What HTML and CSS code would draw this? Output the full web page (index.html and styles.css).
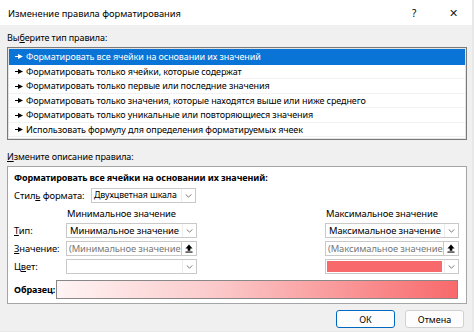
FILE: index.html
```html
<!DOCTYPE html>
<html lang="ru">
<head>
    <meta charset="UTF-8">
    <title>Изменение правила форматирования</title>
    <link rel="stylesheet" href="styles.css">
</head>
<body>
    <div class="dialog">
        <header class="titlebar">
            <span class="title">Изменение правила форматирования</span>
            <span class="help">?</span>
            <span class="close">&#x2715;</span>
        </header>

        <main class="content">
            <!-- Rule type -->
            <div class="caption caption-first">Вы<u>б</u>ерите тип правила:</div>
            <ul class="rule-list">
                <li class="selected"><svg class="bullet" viewBox="0 0 8 5"><path d="M0 2.5H4" stroke="currentColor" stroke-width="1"/><path d="M3 0L8 2.5L3 5Z" fill="currentColor"/></svg>Форматировать все ячейки на основании их значений</li>
                <li><svg class="bullet" viewBox="0 0 8 5"><path d="M0 2.5H4" stroke="currentColor" stroke-width="1"/><path d="M3 0L8 2.5L3 5Z" fill="currentColor"/></svg>Форматировать только ячейки, которые содержат</li>
                <li><svg class="bullet" viewBox="0 0 8 5"><path d="M0 2.5H4" stroke="currentColor" stroke-width="1"/><path d="M3 0L8 2.5L3 5Z" fill="currentColor"/></svg>Форматировать только первые или последние значения</li>
                <li><svg class="bullet" viewBox="0 0 8 5"><path d="M0 2.5H4" stroke="currentColor" stroke-width="1"/><path d="M3 0L8 2.5L3 5Z" fill="currentColor"/></svg>Форматировать только значения, которые находятся выше или ниже среднего</li>
                <li><svg class="bullet" viewBox="0 0 8 5"><path d="M0 2.5H4" stroke="currentColor" stroke-width="1"/><path d="M3 0L8 2.5L3 5Z" fill="currentColor"/></svg>Форматировать только уникальные или повторяющиеся значения</li>
                <li><svg class="bullet" viewBox="0 0 8 5"><path d="M0 2.5H4" stroke="currentColor" stroke-width="1"/><path d="M3 0L8 2.5L3 5Z" fill="currentColor"/></svg>Использовать формулу для определения форматируемых ячеек</li>
            </ul>

            <!-- Rule description -->
            <div class="caption caption-second"><u>И</u>змените описание правила:</div>
            <section class="rule-box">
                <div class="rule-title">Форматировать все ячейки на основании их значений:</div>

                <div class="style-row">
                    <span class="style-label">Стил<u>ь</u> формата:</span>
                    <div class="select style-select">
                        <span class="select-text">Двухцветная шкала</span>
                        <span class="select-arrow"><svg viewBox="0 0 8 5"><path d="M0.5 0.5L4 4L7.5 0.5" fill="none" stroke="#555" stroke-width="1"/></svg></span>
                    </div>
                </div>

                <div class="grid">
                    <span></span>
                    <span class="col-head">Минимальное значение</span>
                    <span></span>
                    <span class="col-head">Максимальное значение</span>

                    <span class="row-label"><u>Т</u>ип:</span>
                    <div class="select">
                        <span class="select-text">Минимальное значение</span>
                        <span class="select-arrow"><svg viewBox="0 0 8 5"><path d="M0.5 0.5L4 4L7.5 0.5" fill="none" stroke="#555" stroke-width="1"/></svg></span>
                    </div>
                    <span></span>
                    <div class="select">
                        <span class="select-text">Максимальное значение</span>
                        <span class="select-arrow"><svg viewBox="0 0 8 5"><path d="M0.5 0.5L4 4L7.5 0.5" fill="none" stroke="#555" stroke-width="1"/></svg></span>
                    </div>

                    <span class="row-label"><u>З</u>начение:</span>
                    <div class="field">
                        <span class="field-text">(Минимальное значение)</span>
                        <span class="field-button"><svg viewBox="0 0 9 10"><path d="M4.5 0.5L8.5 5H6V7.5H3V5H0.5Z" fill="#000"/><path d="M0.5 9H8.5" stroke="#000" stroke-width="1.2"/></svg></span>
                    </div>
                    <span></span>
                    <div class="field">
                        <span class="field-text">(Максимальное значение)</span>
                        <span class="field-button"><svg viewBox="0 0 9 10"><path d="M4.5 0.5L8.5 5H6V7.5H3V5H0.5Z" fill="#000"/><path d="M0.5 9H8.5" stroke="#000" stroke-width="1.2"/></svg></span>
                    </div>

                    <span class="row-label">Ц<u>в</u>ет:</span>
                    <div class="select color-select">
                        <span class="swatch"></span>
                        <span class="select-arrow"><svg viewBox="0 0 8 5"><path d="M0.5 0.5L4 4L7.5 0.5" fill="none" stroke="#555" stroke-width="1"/></svg></span>
                    </div>
                    <span></span>
                    <div class="select color-select">
                        <span class="swatch swatch-red"></span>
                        <span class="select-arrow"><svg viewBox="0 0 8 5"><path d="M0.5 0.5L4 4L7.5 0.5" fill="none" stroke="#555" stroke-width="1"/></svg></span>
                    </div>
                </div>

                <div class="sample-row">
                    <span class="sample-label">Образец:</span>
                    <div class="sample-bar"></div>
                </div>
            </section>

            <div class="buttons">
                <button class="btn btn-default">ОК</button>
                <button class="btn">Отмена</button>
            </div>
        </main>
    </div>
</body>
</html>
```

FILE: styles.css
```css
/* General Styles */
body {
    margin: 0;
    padding: 0;
    font-family: "Noto Sans", "Open Sans", sans-serif;
    font-size: 9px;
    letter-spacing: -0.1px;
    color: #000;
    background: #e8e8e8;
}

u {
    text-decoration: underline;
    text-underline-offset: 1px;
}

.dialog {
    width: 472px;
    height: 331px;
    background: #f0f0f0;
    overflow: hidden;
}

/* Title bar */
.titlebar {
    height: 25px;
    background: #fff;
    display: flex;
    align-items: center;
    padding: 0 8px;
}

.title {
    font-size: 9.3px;
    letter-spacing: 0;
    flex: 1;
    padding-top: 1px;
}

.help {
    font-size: 10px;
    width: 8px;
    margin-right: 29px;
}

.close {
    font-size: 11px;
    color: #222;
    margin-right: 6px;
}

.content {
    padding: 0 5px 0 7px;
}

.caption {
    height: 14px;
    line-height: 14px;
}

.caption-first {
    margin-top: 6px;
}

.caption-second {
    margin-top: 10px;
}

/* Rule type list */
.rule-list {
    list-style: none;
    margin: 2px 0 0;
    padding: 1px;
    height: 89px;
    background: #fff;
    border: 1px solid #7a7a7a;
    box-shadow: inset 0 0 0 1px #e3e3e3;
}

.rule-list li {
    height: 14.5px;
    line-height: 14.5px;
    padding-left: 6px;
    display: flex;
    align-items: center;
    white-space: nowrap;
    box-shadow: inset 0 -1px 0 #f2f2f2;
}

.rule-list li.selected {
    background: #0a74d6;
    color: #fff;
    height: 15.5px;
    box-shadow: none;
}

.bullet {
    width: 8px;
    height: 5px;
    margin-right: 3px;
    flex: none;
}

/* Rule description box */
.rule-box {
    margin-top: 2px;
    box-sizing: border-box;
    height: 138px;
    background: #fff;
    border: 1px solid #a5a5a5;
    padding: 5px 6px 0 6px;
    font-size: 9.4px;
}

.rule-title {
    font-weight: bold;
    font-size: 9px;
    height: 12px;
    line-height: 12px;
}

.style-row {
    display: flex;
    align-items: center;
    margin-top: 4px;
    height: 15px;
}

.style-label {
    width: 77px;
}

.style-select {
    width: 105px;
    font-size: 8.8px;
}

.style-select .select-text {
    padding-left: 2px;
}

.grid {
    display: grid;
    grid-template-columns: 52px 131px 128px 134px;
    grid-template-rows: 13px 15px 15px 15px;
    row-gap: 3px;
    margin-top: 4px;
    align-items: center;
}

.col-head {
    padding-left: 1px;
    line-height: 13px;
    white-space: nowrap;
}

.row-label {
    line-height: 15px;
}

.select, .field {
    height: 15px;
    box-sizing: border-box;
    border: 1px solid #c9c9c9;
    background: #fff;
    display: flex;
    align-items: stretch;
}

.select-text, .field-text {
    flex: 1;
    padding-left: 3px;
    line-height: 13px;
    white-space: nowrap;
    overflow: hidden;
}

.field-text {
    color: #777;
    padding-left: 2px;
}

.select-arrow {
    width: 13px;
    flex: none;
    display: flex;
    align-items: center;
    justify-content: center;
    border-left: 1px solid #ececec;
}

.select-arrow svg {
    width: 7px;
    height: 4px;
}

.field-button {
    width: 14px;
    flex: none;
    display: flex;
    align-items: center;
    justify-content: center;
    border-left: 1px solid #c9c9c9;
}

.field-button svg {
    width: 8px;
    height: 9px;
}

.swatch {
    flex: 1;
    margin: 1px 2px 1px 1px;
}

.swatch-red {
    background: #f8696b;
}

.sample-row {
    display: flex;
    align-items: center;
    margin-top: 6px;
    height: 19px;
}

.sample-label {
    width: 42px;
    font-size: 9px;
    font-weight: bold;
    white-space: nowrap;
}

.sample-bar {
    flex: 1;
    margin-right: 2px;
    height: 19px;
    box-sizing: border-box;
    border: 1px solid #888;
    background: linear-gradient(to right, #fff4f4, #fbc9ca 40%, #f8696b);
}

/* Buttons */
.buttons {
    display: flex;
    justify-content: flex-end;
    gap: 10px;
    margin-top: 6px;
    padding-right: 3px;
}

.btn {
    font-family: inherit;
    font-size: 9px;
    width: 59px;
    height: 18px;
    padding: 0;
    background: #fdfdfd;
    border: 1px solid #d0d0d0;
    border-radius: 3px;
}

.btn-default {
    border: 1px solid #0067c0;
    box-shadow: inset 0 0 0 1px #fff;
}
```
